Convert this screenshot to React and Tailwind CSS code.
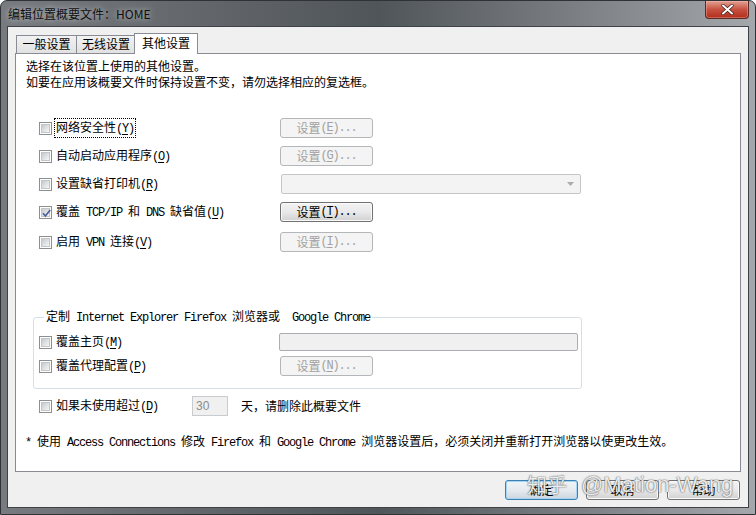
import React from 'react';

const mono = "font-['Liberation_Mono',monospace] text-[12px] tracking-[-1.2px] whitespace-pre";

// latin runs are set in a fixed 6px cell, like the dialog font
function M({ children }) {
  return <span className={mono}>{children}</span>;
}

function Acc({ k }) {
  return (
    <M>
      (<span className="underline underline-offset-2">{k}</span>)
    </M>
  );
}

function Check({ checked }) {
  return (
    <span className="relative flex h-[13px] w-[13px] shrink-0 items-center justify-center border border-[#8e8f8f] bg-white">
      <span className="h-[9px] w-[9px] border border-[#c3c6c9] bg-gradient-to-br from-[#c6c9cd] to-[#f7f7f7]" />
      {checked && (
        <svg className="absolute left-[1px] top-[1px]" width="11" height="11" viewBox="0 0 11 11">
          <path d="M2 5.2 L4.4 8 L9.2 2" fill="none" stroke="#4a5f97" strokeWidth="1.7" />
        </svg>
      )}
    </span>
  );
}

function Btn({ children, disabled, primary, className = '' }) {
  let look = 'border-[#707070] bg-gradient-to-b from-[#f3f3f3] via-[#e9e9e9] to-[#d1d1d1] text-black shadow-[inset_0_0_0_1px_#fbfbfb]';
  if (disabled) look = 'border-[#b4b7ba] bg-[#f4f4f4] text-[#a2a2a2]';
  if (primary) look = 'border-[#3c7fb1] bg-gradient-to-b from-[#f0f4f7] via-[#e6ebef] to-[#cdd6dd] text-black shadow-[inset_0_0_0_1px_#a6d6f3]';
  return (
    <div className={`flex items-center justify-center rounded-[3px] border ${look} ${className}`}>
      {children}
    </div>
  );
}

function Label({ focus, children }) {
  return (
    <span className={`ml-[2px] px-[1px] leading-[15px] ${focus ? 'border border-dotted border-black' : 'border border-transparent'}`}>
      {children}
    </span>
  );
}

function Row({ checked, focus, label, width = 'w-[241px]', className = '', children }) {
  return (
    <div className={`flex h-[20px] items-center ${className}`}>
      <div className={`flex items-center ${width}`}>
        <Check checked={checked} />
        <Label focus={focus}>{label}</Label>
      </div>
      {children}
    </div>
  );
}

function SetBtn({ k, disabled }) {
  return (
    <Btn disabled={disabled} className="h-[20px] w-[93px]">
      <span>设置</span>
      <Acc k={k} />
      <M>...</M>
    </Btn>
  );
}

function Tab({ children, active, className = '' }) {
  return (
    <div
      className={`flex items-start justify-center border border-b-0 border-[#898c95] ${
        active ? 'relative z-10 -mb-[1px] h-[21px] bg-white pt-[1px]' : 'h-[18px] bg-gradient-to-b from-[#f2f2f2] to-[#e1e1e1] pt-0'
      } ${className}`}
    >
      {children}
    </div>
  );
}

export default function App() {
  return (
    <div className="relative flex h-[515px] w-[756px] flex-col overflow-hidden rounded-t-[7px] border border-[#2f3337] bg-gradient-to-r from-[#777b80] via-[#50555a] to-[#a4a8ac] font-['Noto_Sans_CJK_SC',sans-serif] text-[12px] leading-[16px] text-black">
      {/* title bar */}
      <div className="flex h-[25px] shrink-0 items-start justify-between">
        <div className="ml-[7px] mt-[5px] text-[12px] text-[#101010] [text-shadow:0_0_6px_rgba(255,255,255,0.7)]">
          编辑位置概要文件：HOME
        </div>
        <div className="mr-[6px] flex h-[18px] w-[44px] items-center justify-center rounded-b-[4px] border border-t-0 border-[#5a2a24] bg-gradient-to-b from-[#e2a093] via-[#c7503f] to-[#b02d1c] shadow-[inset_0_0_0_1px_rgba(255,200,190,0.35)]">
          <svg width="13" height="11" viewBox="0 0 13 11">
            <path d="M2 1.5 L11 9.5 M11 1.5 L2 9.5" stroke="#3a1510" strokeWidth="3.2" strokeLinecap="round" />
            <path d="M2 1.5 L11 9.5 M11 1.5 L2 9.5" stroke="#ffffff" strokeWidth="2" strokeLinecap="round" />
          </svg>
        </div>
      </div>

      {/* client area */}
      <div className="mx-[6px] mb-[6px] flex flex-1 flex-col border border-[#3e4246] bg-[#f0f0f0] px-[7px] pt-[6px]">
        <div className="flex h-[20px] items-end pl-[1px]">
          <Tab className="w-[61px]">一般设置</Tab>
          <Tab className="-ml-[1px] w-[60px]">无线设置</Tab>
          <Tab active className="-ml-[2px] w-[64px]">其他设置</Tab>
        </div>

        <div className="flex h-[419px] flex-col border border-[#898c95] bg-white">
          <div className="pl-[10px] pt-[4px]">
            <div>选择在该位置上使用的其他设置。</div>
            <div>如要在应用该概要文件时保持设置不变，请勿选择相应的复选框。</div>
          </div>

          <div className="mt-[28px] flex flex-col gap-[8px] pl-[23px]">
            <Row focus label={<>网络安全性<Acc k="Y" /></>}>
              <SetBtn k="E" disabled />
            </Row>
            <Row label={<>自动启动应用程序<Acc k="O" /></>}>
              <SetBtn k="G" disabled />
            </Row>
            <Row label={<>设置缺省打印机<Acc k="R" /></>}>
              <div className="ml-[1px] flex h-[20px] w-[300px] items-center justify-end rounded-[2px] border border-[#c4c6c9] bg-[#f3f3f3] pr-[6px]">
                <svg width="7" height="4" viewBox="0 0 7 4">
                  <path d="M0 0 H7 L3.5 4 Z" fill="#a9abae" />
                </svg>
              </div>
            </Row>
            <Row checked label={<>覆盖<M> TCP/IP </M>和<M> DNS </M>缺省值<Acc k="U" /></>}>
              <SetBtn k="T" />
            </Row>
            <Row className="mt-[2px]" label={<>启用<M> VPN </M>连接<Acc k="V" /></>}>
              <SetBtn k="I" disabled />
            </Row>
          </div>

          <fieldset className="ml-[17px] mt-[56px] w-[549px] rounded-[3px] border border-[#d5dfe5] pb-[12px] pl-[5px]">
            <legend className="ml-[5px] px-[2px] leading-[16px]">
              定制<M> Internet Explorer Firefox </M>浏览器或<M>  Google Chrome</M>
            </legend>
            <div className="mt-[6px] flex flex-col gap-[4px]">
              <Row width="w-[240px]" label={<>覆盖主页<Acc k="M" /></>}>
                <div className="h-[18px] w-[299px] rounded-[2px] border border-[#abadb3] bg-[#f0f0f0]" />
              </Row>
              <Row label={<>覆盖代理配置<Acc k="P" /></>}>
                <SetBtn k="N" disabled />
              </Row>
            </div>
          </fieldset>

          <Row className="mt-[7px] pl-[23px]" width="w-[153px]" label={<>如果未使用超过<Acc k="D" /></>}>
            <div className="flex h-[20px] w-[36px] items-center border border-[#c9cbce] bg-[#f0f0f0] pl-[3px] text-[#8c8c8c]">
              <span className="font-['Liberation_Sans',sans-serif] text-[12px]">30</span>
            </div>
            <span className="ml-[13px]">天，请删除此概要文件</span>
          </Row>

          <div className="mt-[17px] pl-[9px]">
            <M>* </M>使用<M> Access Connections </M>修改<M> Firefox </M>和<M> Google Chrome </M>浏览器设置后，必须关闭并重新打开浏览器以使更改生效。
          </div>
        </div>

        <div className="mt-[8px] flex justify-end gap-[8px] pr-[1px]">
          <Btn primary className="h-[20px] w-[73px]">确定</Btn>
          <Btn className="h-[20px] w-[73px]">取消</Btn>
          <Btn className="h-[20px] w-[73px]">帮助</Btn>
        </div>
      </div>

      {/* watermark */}
      <div className="pointer-events-none absolute left-[526px] top-[470px] flex items-center gap-[14px] text-[22px] leading-[28px] text-white/90 [text-shadow:0_0_1px_rgba(40,40,40,0.9),0_0_2px_rgba(90,90,90,0.6)]">
        <span className="font-['Noto_Sans_CJK_SC',sans-serif] text-[20px]">知乎</span>
        <span className="font-['Liberation_Sans',sans-serif]">@Mation-Wang</span>
      </div>
    </div>
  );
}
